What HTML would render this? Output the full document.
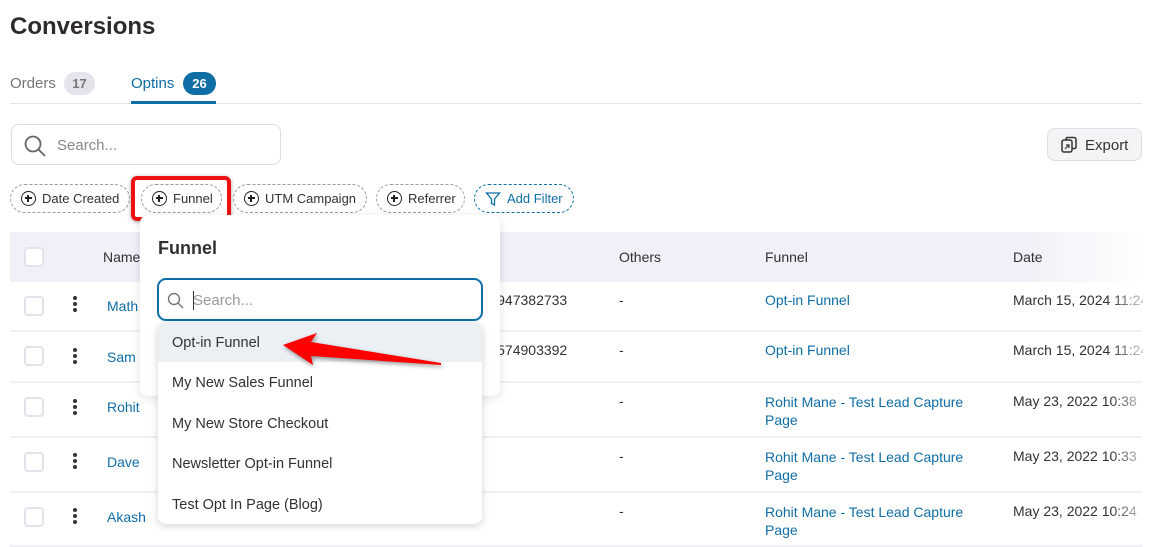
<!DOCTYPE html>
<html><head><meta charset="utf-8">
<style>
*{box-sizing:border-box;margin:0;padding:0}
body{width:1153px;height:547px;overflow:hidden;background:#fff;font-family:"Liberation Sans",sans-serif;color:#353030;position:relative}
.a{position:absolute;white-space:nowrap}
.chip{position:absolute;top:184px;height:29px;border:1px dashed #9a9a9a;border-radius:15px;font-size:13px;display:flex;align-items:center;padding-left:10px;gap:6px;color:#353030}
.pl{width:15px;height:15px;border:1.5px solid #222;border-radius:50%;position:relative;flex:none}
.pl:before{content:"";position:absolute;left:2.5px;top:5.25px;width:7px;height:1.5px;background:#222}
.pl:after{content:"";position:absolute;left:5.25px;top:2.5px;width:1.5px;height:7px;background:#222}
.cb{position:absolute;left:24px;width:20px;height:20px;border:2px solid #e2e2ea;border-radius:4px;background:#fff}
.dots{position:absolute;left:73px;width:4px}
.dots i{display:block;width:4px;height:4px;border-radius:50%;background:#333;margin-bottom:2px}
.row{position:absolute;left:10px;width:1132px;border-top:2px solid #f0f0f5}
.t{font-size:14px}
.lnk{color:#0e6ea5}
.item{position:absolute;left:0;width:324px;height:40px;font-size:14.5px;padding-left:14px;line-height:42px;color:#353030}
.dt{position:absolute;left:1013px;width:130px;overflow:hidden;font-size:14px;white-space:nowrap;-webkit-mask-image:linear-gradient(90deg,#000 75%,rgba(0,0,0,.25));mask-image:linear-gradient(90deg,#000 75%,rgba(0,0,0,.25))}
</style></head><body>
<div class="a" style="left:10px;top:13px;font-size:24px;font-weight:600;color:#2f2b2b">Conversions</div>

<div class="a" style="left:10px;top:75px;font-size:15px;color:#757575">Orders</div>
<div class="a" style="left:64px;top:72px;width:31px;height:23px;border-radius:12px;background:#e4e4ec;color:#777;font-size:13px;font-weight:bold;text-align:center;line-height:23px">17</div>
<div class="a" style="left:131px;top:75px;font-size:15px;color:#0e6ea5">Optins</div>
<div class="a" style="left:183px;top:72px;width:33px;height:23px;border-radius:12px;background:#0e6ea5;color:#fff;font-size:13px;font-weight:bold;text-align:center;line-height:23px">26</div>
<div class="a" style="left:10px;top:103px;width:1132px;height:1px;background:#e2e2ea"></div>
<div class="a" style="left:131px;top:101px;width:85px;height:3px;background:#0e6ea5"></div>

<div class="a" style="left:11px;top:124px;width:270px;height:41px;border:1px solid #dcdce6;border-radius:8px"></div>
<svg class="a" style="left:23px;top:134px" width="24" height="24" viewBox="0 0 24 24"><circle cx="10" cy="10" r="7.5" fill="none" stroke="#666" stroke-width="1.8"/><path d="M15.5 15.5L22 22" stroke="#666" stroke-width="1.8"/></svg>
<div class="a" style="left:57px;top:137px;font-size:15px;color:#888">Search...</div>

<div class="a" style="left:1047px;top:128px;width:95px;height:33px;border:1px solid #dedee3;border-radius:8px;background:#f4f4f6"></div>
<svg class="a" style="left:1060px;top:136px" width="18" height="18" viewBox="0 0 18 18"><rect x="2" y="4" width="10" height="12" rx="2" fill="none" stroke="#333" stroke-width="1.5"/><path d="M6 4V3a1.5 1.5 0 011.5-1.5H14a2 2 0 012 2V11a1.5 1.5 0 01-1.5 1.5H12" fill="none" stroke="#333" stroke-width="1.5"/><path d="M5 13l4-4M6 9h3v3" stroke="#333" stroke-width="1.2" fill="none"/></svg>
<div class="a" style="left:1085px;top:137px;font-size:15px;color:#333">Export</div>

<div class="chip" style="left:10px;width:120px"><span class="pl"></span>Date Created</div>
<div class="chip" style="left:141px;width:81px"><span class="pl"></span>Funnel</div>
<div class="a" style="left:131px;top:176px;width:100px;height:45px;border:4px solid #ee1111;border-radius:6px;box-shadow:0 1px 4px rgba(0,0,0,.35)"></div>
<div class="chip" style="left:233px;width:134px"><span class="pl"></span>UTM Campaign</div>
<div class="chip" style="left:376px;width:89px"><span class="pl"></span>Referrer</div>
<div class="chip" style="left:474px;width:100px;border-color:#0e6ea5;color:#0e6ea5"><svg width="16" height="16" viewBox="0 0 16 16"><path d="M1.5 2h13L9.5 8v6l-3-1.5V8z" fill="none" stroke="#0e6ea5" stroke-width="1.3"/></svg>Add Filter</div>

<div class="a" style="left:10px;top:232px;width:1132px;height:50px;background:linear-gradient(90deg,#f0f0f8 90%,#fff 100%)"></div>
<div class="cb" style="top:247px"></div>
<div class="a t" style="left:103px;top:249px">Name</div>
<div class="a t" style="left:619px;top:249px">Others</div>
<div class="a t" style="left:765px;top:249px">Funnel</div>
<div class="a t" style="left:1013px;top:249px">Date</div>

<div class="row" style="top:330px"></div><div class="row" style="top:381px"></div><div class="row" style="top:436px"></div><div class="row" style="top:491px"></div><div class="row" style="top:545px"></div>

<div class="cb" style="top:296px"></div><div class="dots" style="top:296px"><i></i><i></i><i></i></div><div class="a t lnk" style="left:107px;top:298px">Math</div>
<div class="cb" style="top:346px"></div><div class="dots" style="top:348px"><i></i><i></i><i></i></div><div class="a t lnk" style="left:107px;top:349px">Sam</div>
<div class="cb" style="top:397px"></div><div class="dots" style="top:399px"><i></i><i></i><i></i></div><div class="a t lnk" style="left:107px;top:399px">Rohit</div>
<div class="cb" style="top:452px"></div><div class="dots" style="top:453px"><i></i><i></i><i></i></div><div class="a t lnk" style="left:107px;top:454px">Dave</div>
<div class="cb" style="top:507px"></div><div class="dots" style="top:508px"><i></i><i></i><i></i></div><div class="a t lnk" style="left:107px;top:509px">Akash</div>

<div class="a t" style="left:466px;top:292px">9393947382733</div>
<div class="a t" style="left:466px;top:342px">9393574903392</div>
<div class="a t" style="left:619px;top:292px">-</div><div class="a t" style="left:619px;top:342px">-</div><div class="a t" style="left:619px;top:393px">-</div><div class="a t" style="left:619px;top:448px">-</div><div class="a t" style="left:619px;top:503px">-</div>
<div class="a t lnk" style="left:765px;top:292px">Opt-in Funnel</div>
<div class="a t lnk" style="left:765px;top:342px">Opt-in Funnel</div>
<div class="a t lnk" style="left:765px;top:393px;line-height:18px">Rohit Mane - Test Lead Capture<br>Page</div>
<div class="a t lnk" style="left:765px;top:448px;line-height:18px">Rohit Mane - Test Lead Capture<br>Page</div>
<div class="a t lnk" style="left:765px;top:503px;line-height:18px">Rohit Mane - Test Lead Capture<br>Page</div>
<div class="dt" style="top:292px">March 15, 2024 11:24</div>
<div class="dt" style="top:342px">March 15, 2024 11:24</div>
<div class="dt" style="top:393px">May 23, 2022 10:38</div>
<div class="dt" style="top:448px">May 23, 2022 10:33</div>
<div class="dt" style="top:503px">May 23, 2022 10:24</div>

<div class="a" style="left:140px;top:215px;width:360px;height:181px;background:#fff;border-radius:8px;box-shadow:0 2px 10px rgba(0,0,0,.12)"></div>
<div class="a" style="left:158px;top:238px;font-size:18px;font-weight:bold;color:#353030">Funnel</div>
<div class="a" style="left:157px;top:278px;width:326px;height:43px;border:2px solid #0e6ea5;border-radius:9px;background:#fff"></div>
<svg class="a" style="left:167px;top:292px" width="17" height="17" viewBox="0 0 17 17"><circle cx="7" cy="7" r="5.5" fill="none" stroke="#777" stroke-width="1.4"/><path d="M11 11l5 5" stroke="#777" stroke-width="1.4"/></svg>
<div class="a" style="left:193px;top:291px;width:1px;height:19px;background:#333"></div>
<div class="a" style="left:193px;top:292px;font-size:15px;color:#999">Search...</div>

<div class="a" style="left:158px;top:322px;width:324px;height:202px;background:#fff;border-radius:8px;box-shadow:0 2px 8px rgba(0,0,0,.18);overflow:hidden">
<div class="item" style="top:0;background:#eaf0f4">Opt-in Funnel</div>
<div class="item" style="top:40px">My New Sales Funnel</div>
<div class="item" style="top:81px">My New Store Checkout</div>
<div class="item" style="top:121px">Newsletter Opt-in Funnel</div>
<div class="item" style="top:162px">Test Opt In Page (Blog)</div>
</div>

<svg class="a" style="left:275px;top:330px;filter:drop-shadow(1px 2px 2px rgba(0,0,0,.4))" width="175" height="45" viewBox="0 0 175 45"><path d="M8 15L42 3L36 12L166 33L166 35L36 26L38 35Z" fill="#f00"/></svg>
</body></html>
